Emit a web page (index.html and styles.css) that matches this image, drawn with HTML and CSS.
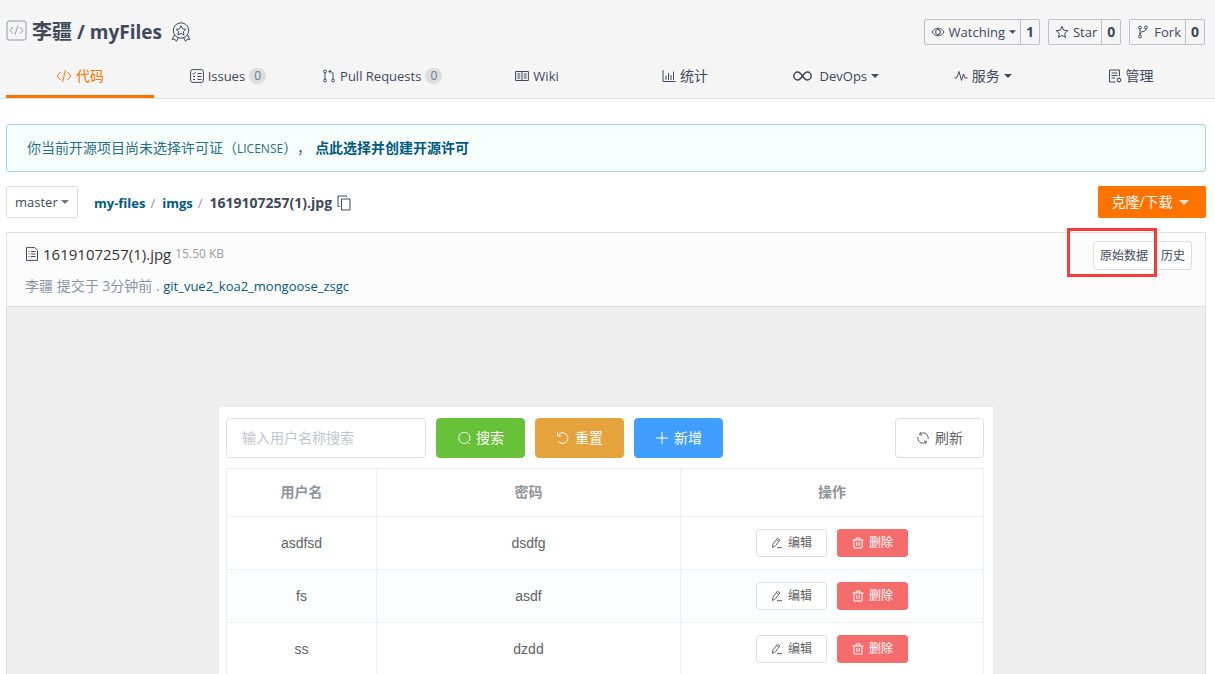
FILE: index.html
```html
<!DOCTYPE html>
<html lang="zh-CN">
<head>
    <meta charset="UTF-8">
    <meta name="viewport" content="width=device-width, initial-scale=1.0">
    <title>李疆/myFiles</title>
    <link rel="stylesheet" href="styles.css">
</head>
<body>
    <!-- shared icons -->
    <svg class="sprite" aria-hidden="true">
        <symbol id="code" viewBox="0 0 16 14"><path d="M4.5 3 1 7l3.5 4M11.5 3 15 7l-3.5 4M9.500 1l-3 12"/></symbol>
        <symbol id="caret" viewBox="0 0 8 4"><path d="M0 0h8L4 4z"/></symbol>
        <symbol id="edit" viewBox="0 0 12 12"><path d="M2 7 6.500 1.200l2.300 1.700L4.500 8.800 1.500 10.500zM5.500 2.600l2.200 1.700M6 10.700h5"/></symbol>
        <symbol id="trash" viewBox="0 0 12 12"><path d="M.5 3h11M2 3v8h8V3M4 3V1h4v2M4.800 5v4M7.200 5v4"/></symbol>
    </svg>

    <header class="header">
        <div class="title-row">
            <h1 class="title">
                <svg class="repo-icon" viewBox="0 0 21 21"><rect x="1" y="1" width="19" height="19" rx="2"/><path d="M7 7l-3 3.500 3 3M14 7l3 3.500-3 3M12 5.500l-3 9"/></svg>
                <a href="#">李疆</a>
                <span class="latin">/</span>
                <a class="latin" href="#">myFiles</a>
                <svg class="medal" viewBox="0 0 20 20"><circle cx="10" cy="8.500" r="7.700"/><path d="M10 3.700l1.500 3.100 3.300.5-2.400 2.300.6 3.400-3-1.600L7 13l.6-3.400-2.400-2.300 3.300-.5zM3.500 13 1.200 17.500l2.600-.3 1.600 2.100 2.300-4M16.500 13l2.300 4.500-2.600-.3-1.600 2.100-2.300-4"/></svg>
            </h1>
            <div class="actions">
                <div class="counter">
                    <button type="button">
                        <svg class="icon" viewBox="0 0 14 14"><path d="M1 7c3-5 9-5 12 0-3 5-9 5-12 0z"/><circle cx="7" cy="7" r="2.500"/></svg>
                        Watching
                        <svg class="caret"><use href="#caret"/></svg>
                    </button>
                    <a href="#">1</a>
                </div>
                <div class="counter">
                    <button type="button">
                        <svg class="icon" viewBox="0 0 14 14"><path d="M7 1.500l1.700 3.700 4 .5-3 2.700.8 4L7 10.400l-3.500 2 .8-4-3-2.700 4-.5z"/></svg>
                        Star
                    </button>
                    <a href="#">0</a>
                </div>
                <div class="counter">
                    <button type="button">
                        <svg class="icon" viewBox="0 0 14 14"><circle cx="4" cy="2.500" r="1.400"/><circle cx="4" cy="11.500" r="1.400"/><circle cx="10" cy="2.500" r="1.400"/><path d="M4 4v6M10 4c0 3.500-6 1.500-6 5"/></svg>
                        Fork
                    </button>
                    <a href="#">0</a>
                </div>
            </div>
        </div>
        <nav class="tabs">
            <a class="tab active" href="#"><svg class="icon wide"><use href="#code"/></svg><span class="cjk">代码</span></a>
            <a class="tab" href="#">
                <svg class="icon" viewBox="0 0 14 14"><rect x=".6" y=".6" width="12.800" height="12.800" rx="2"/><path d="M2.500 4.500l1 1 2-2.300M7.500 4.500h4M3 7.500h2M7.500 7.500h4M3 10.500h2M7.500 10.500h4"/></svg>
                Issues <span class="badge">0</span>
            </a>
            <a class="tab" href="#">
                <svg class="icon" viewBox="0 0 14 14"><circle cx="3" cy="2.500" r="1.400"/><circle cx="3" cy="11.500" r="1.400"/><circle cx="11" cy="11.500" r="1.400"/><path d="M3 4v6M11 10V5c0-2-1-2.500-4-2.500M8.500.8 6.800 2.500l1.700 1.700"/></svg>
                Pull Requests <span class="badge">0</span>
            </a>
            <a class="tab" href="#">
                <svg class="icon" viewBox="0 0 14 14"><path d="M.6 2.500h12.800v9H.6zM7 2.500v9M2.300 5h3M2.300 7h3M2.300 9h3M8.700 5h3M8.700 7h3M8.700 9h3"/></svg>
                Wiki
            </a>
            <a class="tab" href="#"><svg class="icon" viewBox="0 0 14 14"><path d="M1 1v11.500h12.500M4 11V6.500M6.500 11V4M9 11V6M11.500 11V2.500"/></svg><span class="cjk">统计</span></a>
            <a class="tab" href="#">
                <svg class="infinity" viewBox="0 0 19 10"><path d="M9.500 5C7 1.500 6 1 4.800 1a4 4 0 0 0 0 8C6 9 7 8.500 9.500 5S13 1 14.200 1a4 4 0 0 1 0 8C13 9 12 8.500 9.500 5z"/></svg>
                DevOps <svg class="caret"><use href="#caret"/></svg>
            </a>
            <a class="tab" href="#"><svg class="icon" viewBox="0 0 14 14"><path d="M.5 9h2.200L5 2.500 7.500 11.500 9.500 5l1.500 4h2.500"/></svg><span class="cjk">服务</span><svg class="caret"><use href="#caret"/></svg></a>
            <a class="tab" href="#"><svg class="icon" viewBox="0 0 14 14"><path d="M7.500 13H1.500V1h10v6M3.500 4h6M3.500 6.500h6M3.500 9H7"/><circle cx="11" cy="11" r="1.800"/><path d="M11 8.500v.7M11 12.800v.7M8.800 9.800l.6.3M12.600 11.900l.6.300M8.800 12.200l.6-.3M12.600 10.100l.6-.3"/></svg><span class="cjk">管理</span></a>
        </nav>
    </header>

    <main class="main">
        <div class="notice">
            <span>你当前开源项目尚未选择许可证（<span class="latin">LICENSE</span>），</span>
            <a href="#">点此选择并创建开源许可</a>
        </div>

        <div class="path-row">
            <div class="branch">
                <select aria-label="分支"><option>master</option></select>
                <svg class="caret"><use href="#caret"/></svg>
            </div>
            <div class="breadcrumb">
                <a href="#">my-files</a><i>/</i>
                <a href="#">imgs</a><i>/</i>
                <strong>1619107257(1).jpg</strong>
                <button class="copy" type="button" aria-label="复制路径"><svg viewBox="0 0 14 16"><path d="M4.500 4h8.500v11H4.500zM2.500 11.500H1V1h8.500v1"/></svg></button>
            </div>
            <button class="clone" type="button">克隆/下载 <svg class="caret"><use href="#caret"/></svg></button>
        </div>

        <section class="file">
            <div class="file-head">
                <div>
                    <div class="file-name">
                        <svg class="icon" viewBox="0 0 14 14"><path d="M1.500.6h8.300l2.700 2.700v10.100h-11zM3.500 4.500h1M6 4.500h4.500M3.500 7h1M6 7h4.500M3.500 9.500h1M6 9.500h4.500"/></svg>
                        <span>1619107257(1).jpg</span>
                        <small>15.50 KB</small>
                    </div>
                    <div class="commit">李疆 提交于 3分钟前 . <a href="#">git_vue2_koa2_mongoose_zsgc</a></div>
                </div>
                <div class="file-actions">
                    <button type="button">原始数据</button>
                    <button type="button">历史</button>
                    <span class="mark"></span>
                </div>
            </div>

            <div class="viewer">
                <div class="panel">
                    <div class="toolbar">
                        <input type="text" placeholder="输入用户名称搜索" aria-label="用户名称">
                        <button class="btn success" type="button"><svg viewBox="0 0 14 14"><path d="M10.500 11.500A5.600 5.600 0 1 1 12 10M10.300 10.300l2.700 2.700"/></svg>搜索</button>
                        <button class="btn warning" type="button"><svg viewBox="0 0 14 14"><path d="M2 4.500A5.300 5.300 0 1 1 2.200 10M1.500 1.500v3.500H5"/></svg>重置</button>
                        <button class="btn primary" type="button"><svg viewBox="0 0 14 14"><path d="M7 1v12M1 7h12"/></svg>新增</button>
                        <button class="btn refresh" type="button"><svg viewBox="0 0 14 14"><path d="M12.200 8V6.500A5 5 0 0 0 4 3M1.800 6v1.500A5 5 0 0 0 10 11M4.500 1.200 3.500 3.500l2.500.7M9.500 12.800l1-2.300-2.500-.7"/></svg>刷新</button>
                    </div>
                    <table class="users">
                        <colgroup><col class="col-name"><col class="col-pass"><col></colgroup>
                        <thead>
                            <tr><th>用户名</th><th>密码</th><th>操作</th></tr>
                        </thead>
                        <tbody>
                            <tr>
                                <td>asdfsd</td>
                                <td>dsdfg</td>
                                <td><div class="ops">
                                    <button class="btn mini" type="button"><svg><use href="#edit"/></svg>编辑</button>
                                    <button class="btn mini danger" type="button"><svg><use href="#trash"/></svg>删除</button>
                                </div></td>
                            </tr>
                            <tr>
                                <td>fs</td>
                                <td>asdf</td>
                                <td><div class="ops">
                                    <button class="btn mini" type="button"><svg><use href="#edit"/></svg>编辑</button>
                                    <button class="btn mini danger" type="button"><svg><use href="#trash"/></svg>删除</button>
                                </div></td>
                            </tr>
                            <tr>
                                <td>ss</td>
                                <td>dzdd</td>
                                <td><div class="ops">
                                    <button class="btn mini" type="button"><svg><use href="#edit"/></svg>编辑</button>
                                    <button class="btn mini danger" type="button"><svg><use href="#trash"/></svg>删除</button>
                                </div></td>
                            </tr>
                        </tbody>
                    </table>
                </div>
            </div>
        </section>
    </main>
</body>
</html>
```
FILE: styles.css
```css
* {
    box-sizing: border-box;
}

body {
    margin: 0;
    height: 100vh;
    display: flex;
    flex-direction: column;
    overflow: hidden;
    font-family: "Open Sans", "Noto Sans CJK SC", sans-serif;
    font-size: 14px;
    line-height: 20px;
    text-spacing-trim: space-all;
    color: #40485b;
    background-color: #fff;
}

a {
    color: inherit;
    text-decoration: none;
}

button, input, select {
    font: inherit;
    color: inherit;
}

button, select {
    cursor: pointer;
}

svg {
    fill: none;
    stroke: currentColor;
    stroke-width: 1;
    flex: none;
}

.sprite {
    position: absolute;
    width: 0;
    height: 0;
}

.icon {
    width: 14px;
    height: 14px;
}

.icon.wide {
    width: 16px;
}

.caret {
    width: 8px;
    height: 4px;
    fill: currentColor;
    stroke: none;
}

/* header */
.header {
    background-color: #f5f5f5;
    border-bottom: 1px solid #dcdddf;
    padding: 16px 10px 0 6px;
}

.title-row {
    display: flex;
    justify-content: space-between;
    align-items: center;
    height: 32px;
}

.title {
    display: flex;
    align-items: center;
    gap: 5px;
    margin: 0;
    font-size: 20px;
    line-height: 30px;
}

.title .latin {
    font-size: 19px;
}

.repo-icon {
    width: 21px;
    height: 21px;
    margin-bottom: 4px;
    color: #9097a6;
}

.medal {
    width: 20px;
    height: 20px;
    margin-left: 4px;
}

.actions {
    display: flex;
    gap: 8px;
}

.counter {
    display: flex;
    height: 26px;
    border: 1px solid #bfc0cb;
    border-radius: 2px;
}

.counter button {
    display: flex;
    align-items: center;
    gap: 4px;
    padding: 0 4px 0 6px;
    border: none;
    background: none;
    font-size: 13px;
}

.counter .caret {
    width: 7px;
}

.counter a {
    padding: 2px 5px;
    border-left: 1px solid #bfc0cb;
    font-weight: bold;
}

.tabs {
    display: grid;
    grid-template-columns: 148fr 148fr 161fr 149fr 147fr 155fr 139fr 157fr;
    height: 50px;
    margin-right: -4px;
}

.tab {
    display: flex;
    justify-content: center;
    align-items: center;
    gap: 4px;
    padding-top: 9px;
    border-bottom: 3px solid transparent;
    font-size: 13px;
}

.tab.active {
    color: #fe7300;
    border-bottom-color: #fe7300;
}

.cjk {
    font-size: 14px;
}

.badge {
    padding: 0 5px;
    border-radius: 8px;
    font-size: 12px;
    line-height: 16px;
    color: #6f7a93;
    background-color: #dcdddf;
}

.infinity {
    width: 19px;
    height: 10px;
    margin-right: 4px;
    stroke-width: 1.5;
}

/* content */
.main {
    flex: 1;
    min-height: 0;
    display: flex;
    flex-direction: column;
    padding: 25px 9px 0 6px;
}

.notice {
    display: flex;
    align-items: center;
    height: 48px;
    padding: 0 20px;
    border: 1px solid #a3d4dc;
    border-radius: 3px;
    color: #276f86;
    background-color: #f8ffff;
}

.notice .latin {
    font-size: 12px;
}

.notice a {
    margin-left: 4px;
    font-weight: bold;
    color: #005980;
}

.path-row {
    display: flex;
    align-items: center;
    height: 32px;
    margin: 14px 0;
}

.branch {
    position: relative;
}

.branch select {
    width: 72px;
    height: 32px;
    padding: 0 8px;
    appearance: none;
    border: 1px solid #dce0e6;
    border-radius: 2px;
    font-size: 13px;
    background-color: #fff;
}

.branch .caret {
    position: absolute;
    right: 9px;
    top: 14px;
    color: #6b7488;
    pointer-events: none;
}

.breadcrumb {
    display: flex;
    align-items: center;
    gap: 5px;
    margin: 2px auto 0 16px;
    font-size: 13px;
    font-weight: bold;
}

.breadcrumb a {
    color: #005980;
}

.breadcrumb i {
    margin-right: 2px;
    font-style: normal;
    font-weight: normal;
    color: #8c92a4;
}

.breadcrumb strong {
    font-size: 14px;
    font-weight: bold;
}

.copy {
    display: flex;
    padding: 0;
    border: none;
    background: none;
}

.copy svg {
    width: 14px;
    height: 16px;
}

.clone {
    display: flex;
    justify-content: center;
    align-items: center;
    gap: 6px;
    width: 108px;
    height: 32px;
    padding: 0 10px 0 6px;
    border: none;
    border-radius: 2px;
    color: #fff;
    background-color: #fe7300;
}

.clone .caret {
    width: 10px;
    height: 5px;
    color: #ffe3cc;
}

.file {
    flex: 1;
    min-height: 0;
    display: flex;
    flex-direction: column;
    border: 1px solid #dce0e3;
    border-bottom: none;
}

.file-head {
    display: flex;
    justify-content: space-between;
    align-items: flex-start;
    padding: 8px 13px 8px 18px;
    height: 74px;
    border-bottom: 1px solid #dce0e6;
    background-color: #fcfcfc;
}

.file-name {
    display: flex;
    align-items: center;
    gap: 4px;
    font-size: 15px;
    line-height: 26px;
    color: #333;
}

.file-name small {
    font-size: 12px;
    color: #9b9b9b;
}

.file-name .icon {
    color: #40485b;
}

.commit {
    margin-top: 8px;
    line-height: 22px;
    color: #8c92a4;
}

.commit a {
    font-size: 13px;
    color: #005980;
}

.file-actions {
    position: relative;
    display: flex;
}

.file-actions button {
    height: 29px;
    padding: 0 6px;
    border: 1px solid #dcdddf;
    border-radius: 4px;
    font-size: 12px;
    background-color: #fff;
}

.file-actions button:first-child {
    border-radius: 4px 0 0 4px;
}

.file-actions button:nth-child(2) {
    border-left: none;
    border-radius: 0 4px 4px 0;
}

/* highlight frame over the raw data button */
.mark {
    position: absolute;
    left: -26px;
    top: -13px;
    width: 90px;
    height: 49px;
    border: 3px solid #f93a3a;
    pointer-events: none;
}

.viewer {
    flex: 1;
    min-height: 0;
    padding-top: 100px;
    overflow: hidden;
    background-color: #eee;
}

.panel {
    max-width: 774px;
    margin: 0 auto;
    padding: 11px 9px 0 7px;
    font-family: "Liberation Sans", "Noto Sans CJK SC", sans-serif;
    color: #606266;
    background-color: #fff;
}

.toolbar {
    display: flex;
    gap: 10px;
    margin-bottom: 10px;
}

.toolbar input {
    width: 200px;
    height: 40px;
    padding: 0 15px;
    border: 1px solid #dcdfe6;
    border-radius: 4px;
}

.toolbar input::placeholder {
    color: #c0c4cc;
}

.btn {
    display: flex;
    justify-content: center;
    align-items: center;
    gap: 5px;
    width: 89px;
    height: 40px;
    padding: 0;
    border: 1px solid #dcdfe6;
    border-radius: 4px;
    background-color: #fff;
}

.btn svg {
    width: 14px;
    height: 14px;
}

.success {
    color: #fff;
    border-color: #67c23a;
    background-color: #67c23a;
}

.warning {
    color: #fff;
    border-color: #e6a23c;
    background-color: #e6a23c;
}

.primary {
    color: #fff;
    border-color: #409eff;
    background-color: #409eff;
}

.refresh {
    margin-left: auto;
}

.users {
    width: 100%;
    table-layout: fixed;
    border-collapse: collapse;
}

.col-name {
    width: 150px;
}

.col-pass {
    width: 304px;
}

.users th, .users td {
    height: 53px;
    padding: 0;
    border: 1px solid #ebeef5;
    text-align: center;
}

.users th {
    height: 48px;
    padding-bottom: 2px;
    color: #909399;
}

.users tbody tr:nth-child(even) {
    background-color: #fbfdff;
}

.ops {
    display: flex;
    justify-content: center;
    gap: 10px;
}

.mini {
    width: 71px;
    height: 28px;
    border-radius: 3px;
    font-size: 12px;
}

.mini svg {
    width: 12px;
    height: 12px;
}

.danger {
    color: #fff;
    border-color: #f56c6c;
    background-color: #f56c6c;
}
```
